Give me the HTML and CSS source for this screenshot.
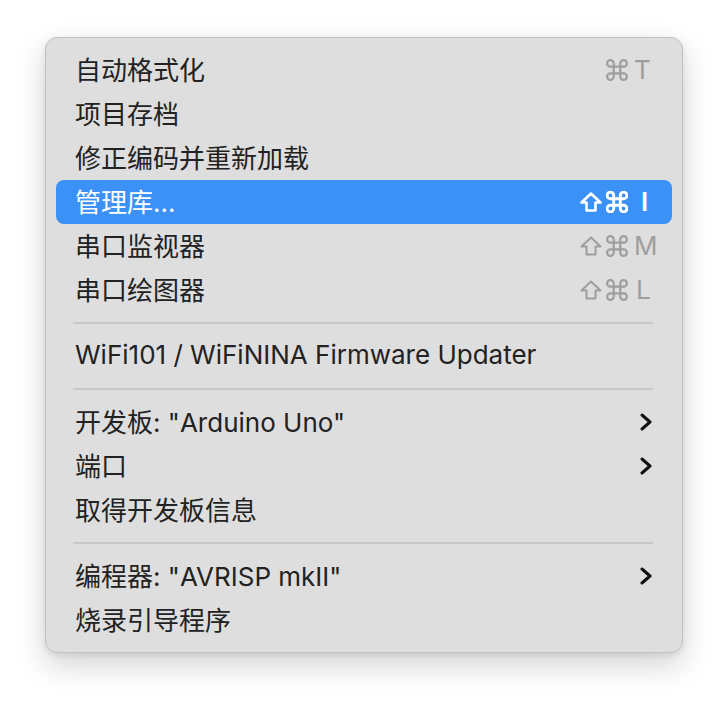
FILE: index.html
```html
<!DOCTYPE html>
<html>
<head>
	<meta charset="utf-8">
	<link rel="stylesheet" href="styles.css">
</head>
<body>
	<div class="menu">
		<div class="item">
			<span class="label">自动格式化</span>
			<span class="keys">
				<svg class="cmd" viewBox="2 2 20 20"><path d="M15 6v12a3 3 0 1 0 3-3H6a3 3 0 1 0 3 3V6a3 3 0 1 0-3 3h12a3 3 0 1 0-3-3"/></svg>
				<span class="key">T</span>
			</span>
		</div>
		<div class="item"><span class="label">项目存档</span></div>
		<div class="item"><span class="label">修正编码并重新加载</span></div>
		<div class="item active">
			<span class="label">管理库...</span>
			<span class="keys">
				<svg class="shift" viewBox="0 0 22 20"><path d="M11 1.5 L20.5 10.5 H15.5 V18.5 H6.5 V10.5 H1.5 Z"/></svg>
				<svg class="cmd" viewBox="2 2 20 20"><path d="M15 6v12a3 3 0 1 0 3-3H6a3 3 0 1 0 3 3V6a3 3 0 1 0-3 3h12a3 3 0 1 0-3-3"/></svg>
				<span class="key key-i">I</span>
			</span>
		</div>
		<div class="item">
			<span class="label">串口监视器</span>
			<span class="keys">
				<svg class="shift" viewBox="0 0 22 20"><path d="M11 1.5 L20.5 10.5 H15.5 V18.5 H6.5 V10.5 H1.5 Z"/></svg>
				<svg class="cmd" viewBox="2 2 20 20"><path d="M15 6v12a3 3 0 1 0 3-3H6a3 3 0 1 0 3 3V6a3 3 0 1 0-3 3h12a3 3 0 1 0-3-3"/></svg>
				<span class="key">M</span>
			</span>
		</div>
		<div class="item">
			<span class="label">串口绘图器</span>
			<span class="keys">
				<svg class="shift" viewBox="0 0 22 20"><path d="M11 1.5 L20.5 10.5 H15.5 V18.5 H6.5 V10.5 H1.5 Z"/></svg>
				<svg class="cmd" viewBox="2 2 20 20"><path d="M15 6v12a3 3 0 1 0 3-3H6a3 3 0 1 0 3 3V6a3 3 0 1 0-3 3h12a3 3 0 1 0-3-3"/></svg>
				<span class="key key-l">L</span>
			</span>
		</div>
		<div class="sep"></div>
		<div class="item"><span class="label">WiFi101 / WiFiNINA Firmware Updater</span></div>
		<div class="sep"></div>
		<div class="item">
			<span class="label">开发板: "Arduino Uno"</span>
			<svg class="chevron" viewBox="0 0 12 18"><path d="M2 2 L10 9 L2 16"/></svg>
		</div>
		<div class="item">
			<span class="label">端口</span>
			<svg class="chevron" viewBox="0 0 12 18"><path d="M2 2 L10 9 L2 16"/></svg>
		</div>
		<div class="item"><span class="label">取得开发板信息</span></div>
		<div class="sep"></div>
		<div class="item">
			<span class="label">编程器: "AVRISP mkII"</span>
			<svg class="chevron" viewBox="0 0 12 18"><path d="M2 2 L10 9 L2 16"/></svg>
		</div>
		<div class="item"><span class="label">烧录引导程序</span></div>
	</div>
</body>
</html>
```

FILE: styles.css
```css
html {
	background: #ffffff;
}
body {
	box-sizing: border-box;
	height: 706px;
	margin: 0;
	padding: 37px 45px 0;
	overflow: hidden;
	background: #ffffff;
	font-family: "Inter", "Noto Sans CJK SC", sans-serif;
}
.menu {
	box-sizing: border-box;
	width: 638px;
	padding: 10px 0;
	background: #dedede;
	border: 1px solid #c2c2c2;
	border-radius: 12px;
	box-shadow: 0 12px 30px rgba(0, 0, 0, 0.18), 0 2px 6px rgba(0, 0, 0, 0.08);
}
.item {
	height: 44px;
	margin: 0 10px;
	padding: 0 18px 0 19px;
	display: flex;
	align-items: center;
	justify-content: space-between;
	border-radius: 8px;
	font-size: 26px;
	color: #222222;
}
.label {
	white-space: nowrap;
	padding-bottom: 4px;
}
.keys {
	display: flex;
	align-items: center;
	gap: 4px;
	color: #9e9e9e;
}
.keys svg {
	fill: none;
	stroke: #9e9e9e;
	stroke-width: 2;
	stroke-linejoin: round;
	stroke-linecap: round;
}
.shift {
	width: 22px;
	height: 20px;
	stroke-width: 1.9;
}
.cmd {
	width: 22px;
	height: 22px;
}
.key {
	box-sizing: border-box;
	width: 22px;
	padding-left: 2px;
	line-height: 1;
}
.key-l {
	padding-left: 4px;
}
.chevron {
	width: 12px;
	height: 18px;
	margin-right: 2px;
	fill: none;
	stroke: #111111;
	stroke-width: 3;
	stroke-linecap: round;
	stroke-linejoin: round;
}
.active {
	background: #3c91f6;
	color: #ffffff;
}
.active .keys {
	color: #ffffff;
}
.active .keys svg {
	stroke: #ffffff;
	stroke-width: 2.6;
}
.key-i {
	padding-left: 9px;
	font-weight: 600;
}
.sep {
	height: 2px;
	margin: 10px 29px 10px 27px;
	background: #c8c8c8;
}
```
